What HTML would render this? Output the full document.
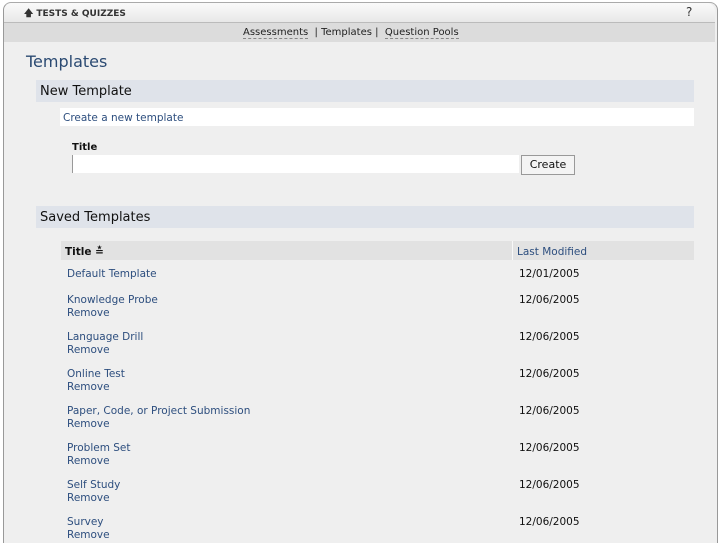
<html><head><style>
body{margin:0;width:720px;height:540px;overflow:hidden;background:#fff;font-family:"DejaVu Sans","Liberation Sans",sans-serif;position:relative}
.a{position:absolute;white-space:nowrap}
.l{color:#2d4e7e;font-size:10.5px}
.d{color:#111;font-size:10.5px}
</style></head><body>
<div class="a" style="left:3px;top:2px;width:713px;height:540px;background:#efefef;border-left:1px solid #999;border-right:1px solid #999;border-top:1px solid #aaa;border-radius:8px 8px 0 0"></div>
<div class="a" style="left:4px;top:3px;width:711px;height:19px;background:linear-gradient(#fafafa,#e8e8e8);border-radius:8px 8px 0 0;border-bottom:1px solid #bbb"></div>
<div class="a" style="left:24px;top:6px;font-size:9px;font-weight:bold;color:#333">🡅 TESTS &amp; QUIZZES</div>
<div class="a" style="left:686px;top:5px;font-size:12px;color:#333">?</div>
<div class="a" style="left:4px;top:23px;width:711px;height:19px;background:#dcdcdc"></div>
<div class="a" style="left:243px;top:27px;font-size:10px;color:#222"><span style="border-bottom:1px dashed #888">Assessments</span> &nbsp;| Templates | &nbsp;<span style="border-bottom:1px dashed #888">Question Pools</span></div>
<div class="a" style="left:26px;top:52px;font-size:16px;color:#2b4a72">Templates</div>
<div class="a" style="left:36px;top:80px;width:658px;height:22px;background:#dfe3ea"></div>
<div class="a" style="left:40px;top:84px;font-size:13px;color:#111">New Template</div>
<div class="a" style="left:60px;top:108px;width:634px;height:18px;background:#fff"></div>
<div class="a l" style="left:63px;top:112px">Create a new template</div>
<div class="a" style="left:72px;top:142px;font-size:10px;font-weight:bold;color:#111">Title</div>
<div class="a" style="left:72px;top:155px;width:446px;height:18px;background:#fff;border-left:1px solid #999"></div>
<div class="a" style="left:521px;top:155px;width:52px;height:18px;background:#f4f4f4;border:1px solid #999;font-size:11px;text-align:center;line-height:18px;color:#111">Create</div>
<div class="a" style="left:36px;top:206px;width:658px;height:22px;background:#dfe3ea"></div>
<div class="a" style="left:40px;top:210px;font-size:13px;color:#111">Saved Templates</div>
<div class="a" style="left:61px;top:241px;width:633px;height:19px;background:#e2e2e2"></div>
<div class="a" style="left:512px;top:241px;width:1px;height:19px;background:#f8f8f8"></div>
<div class="a" style="left:65px;top:246px;font-size:10.5px;font-weight:bold;color:#111">Title ≛</div>
<div class="a l" style="left:517px;top:246px">Last Modified</div>
<div class="a l" style="left:67px;top:268px">Default Template</div><div class="a d" style="left:519px;top:268px">12/01/2005</div>
<div class="a l" style="left:67px;top:294px">Knowledge Probe</div><div class="a d" style="left:519px;top:294px">12/06/2005</div><div class="a l" style="left:67px;top:307px">Remove</div>
<div class="a l" style="left:67px;top:331px">Language Drill</div><div class="a d" style="left:519px;top:331px">12/06/2005</div><div class="a l" style="left:67px;top:344px">Remove</div>
<div class="a l" style="left:67px;top:368px">Online Test</div><div class="a d" style="left:519px;top:368px">12/06/2005</div><div class="a l" style="left:67px;top:381px">Remove</div>
<div class="a l" style="left:67px;top:405px">Paper, Code, or Project Submission</div><div class="a d" style="left:519px;top:405px">12/06/2005</div><div class="a l" style="left:67px;top:418px">Remove</div>
<div class="a l" style="left:67px;top:442px">Problem Set</div><div class="a d" style="left:519px;top:442px">12/06/2005</div><div class="a l" style="left:67px;top:455px">Remove</div>
<div class="a l" style="left:67px;top:479px">Self Study</div><div class="a d" style="left:519px;top:479px">12/06/2005</div><div class="a l" style="left:67px;top:492px">Remove</div>
<div class="a l" style="left:67px;top:516px">Survey</div><div class="a d" style="left:519px;top:516px">12/06/2005</div><div class="a l" style="left:67px;top:529px">Remove</div>
</body></html>
